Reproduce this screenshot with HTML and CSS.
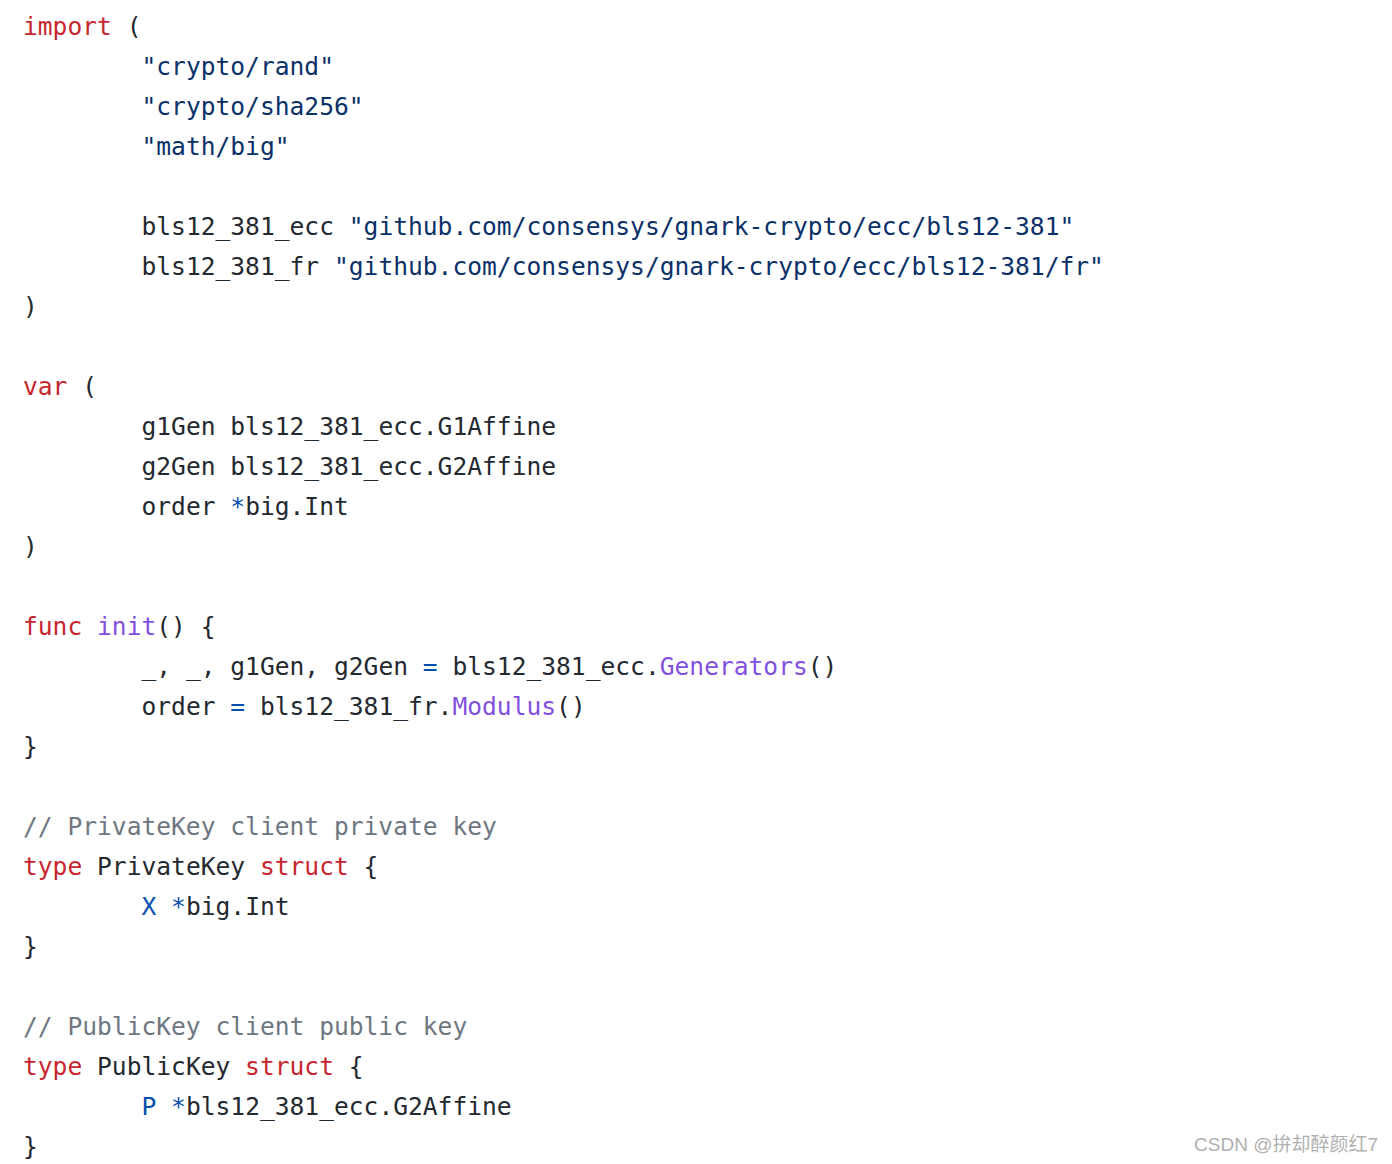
FILE: index.html
```html
<!DOCTYPE html>
<html lang="en">
<head>
<meta charset="utf-8">
<title>Go code</title>
<link rel="stylesheet" href="styles.css">
</head>
<body>
<main class="page">
<pre class="code"><span class="kw">import</span> (
	<span class="str">"crypto/rand"</span>
	<span class="str">"crypto/sha256"</span>
	<span class="str">"math/big"</span>

	bls12_381_ecc <span class="str">"github.com/consensys/gnark-crypto/ecc/bls12-381"</span>
	bls12_381_fr <span class="str">"github.com/consensys/gnark-crypto/ecc/bls12-381/fr"</span>
)

<span class="kw">var</span> (
	g1Gen bls12_381_ecc.G1Affine
	g2Gen bls12_381_ecc.G2Affine
	order <span class="op">*</span>big.Int
)

<span class="kw">func</span> <span class="fn">init</span>() {
	_, _, g1Gen, g2Gen <span class="op">=</span> bls12_381_ecc.<span class="fn">Generators</span>()
	order <span class="op">=</span> bls12_381_fr.<span class="fn">Modulus</span>()
}

<span class="cm">// PrivateKey client private key</span>
<span class="kw">type</span> PrivateKey <span class="kw">struct</span> {
	<span class="op">X</span> <span class="op">*</span>big.Int
}

<span class="cm">// PublicKey client public key</span>
<span class="kw">type</span> PublicKey <span class="kw">struct</span> {
	<span class="op">P</span> <span class="op">*</span>bls12_381_ecc.G2Affine
}</pre>
<div class="watermark">CSDN @拚却醉颜红7</div>
</main>
</body>
</html>
```

FILE: styles.css
```css
html, body {
  margin: 0;
  padding: 0;
  background: #ffffff;
}

.page {
  position: relative;
  width: 1392px;
  height: 1164px;
  overflow: hidden;
  box-sizing: border-box;
  padding: 7px 0 0 23px;
}

.code {
  margin: 0;
  font-family: "DejaVu Sans Mono", "Liberation Mono", monospace;
  font-size: 24.6px;
  line-height: 40px;
  color: #24292f;
  white-space: pre;
  tab-size: 8;
  -moz-tab-size: 8;
}

.kw { color: #c6262e; }
.str { color: #0a3069; }
.fn { color: #8250df; }
.op { color: #0550ae; }
.cm { color: #6e7781; }

.watermark {
  position: absolute;
  right: 14px;
  bottom: 7px;
  font-family: "Liberation Sans", "Noto Sans CJK SC", sans-serif;
  font-size: 19px;
  color: #b0b0b0;
  line-height: 24px;
}
```
